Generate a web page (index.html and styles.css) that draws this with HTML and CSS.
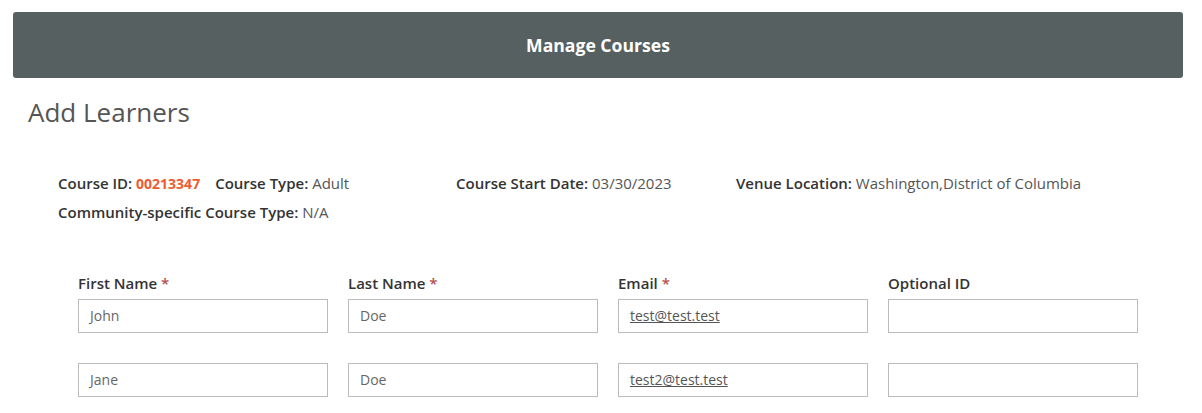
FILE: index.html
```html
<!DOCTYPE html>
<html>
<head>
<meta charset="utf-8">
<link rel="stylesheet" href="styles.css">
</head>
<body>
<div class="page">
  <header class="bar"><h1 class="bar-title">Manage Courses</h1></header>
  <h2 class="page-title">Add Learners</h2>
  <section class="info">
    <div class="info-row">
      <div class="cell cell-1"><b>Course ID:</b> <span class="course-id">00213347</span><span class="sp"></span><b>Course Type:</b> Adult</div>
      <div class="cell cell-2"><b>Course Start Date:</b> 03/30/2023</div>
      <div class="cell cell-3"><b>Venue Location:</b> Washington,District of Columbia</div>
    </div>
    <div class="info-row">
      <div class="cell"><b>Community-specific Course Type:</b> N/A</div>
    </div>
  </section>
  <section class="form">
    <div class="grid">
      <label class="lbl">First Name <span class="req">*</span></label>
      <label class="lbl">Last Name <span class="req">*</span></label>
      <label class="lbl">Email <span class="req">*</span></label>
      <label class="lbl">Optional ID</label>
      <div class="inp">John</div>
      <div class="inp">Doe</div>
      <div class="inp"><span class="mail">test@test.test</span></div>
      <div class="inp"></div>
      <div class="spacer"></div>
      <div class="inp">Jane</div>
      <div class="inp">Doe</div>
      <div class="inp"><span class="mail">test2@test.test</span></div>
      <div class="inp"></div>
    </div>
  </section>
</div>
</body>
</html>
```
FILE: styles.css
```css
* { box-sizing: border-box; }
body {
  margin: 0;
  background: #fff;
  font-family: "Open Sans", "Liberation Sans", sans-serif;
  color: #333;
}
.page { padding: 12px 19px 0 13px; }
.bar {
  height: 66px;
  background: #566060;
  border-radius: 3px;
  display: flex;
  align-items: center;
  justify-content: center;
}
.bar-title {
  margin: 0;
  color: #fff;
  font-size: 17.6px;
  font-weight: 700;
}
.page-title {
  margin: 16px 0 0 15px;
  font-size: 26px;
  font-weight: 400;
  color: #555;
  line-height: 36px;
}
.info {
  margin: 39px 0 0 45px;
  font-size: 15px;
  color: #555;
}
.info b { color: #333; font-weight: 600; }
.info-row { display: flex; line-height: 28px; }
.cell-1 { width: 398px; }
.cell-2 { width: 280px; }
.course-id { color: #ef5b30; font-weight: 700; font-size: 14px; }
.sp { display: inline-block; width: 15px; }
.form { margin: 47px 0 0 65px; }
.grid {
  display: grid;
  grid-template-columns: repeat(4, 250px);
  column-gap: 20px;
}
.lbl {
  font-size: 15px;
  font-weight: 600;
  color: #333;
  line-height: 20px;
  margin-bottom: 6px;
}
.req { color: #b4504a; }
.inp {
  height: 34px;
  border: 1px solid #bbb;
  padding: 0 11px;
  font-size: 14px;
  color: #666;
  line-height: 32px;
}
.mail { color: #555; text-decoration: underline; }
.spacer { grid-column: 1 / -1; height: 30px; }
```
